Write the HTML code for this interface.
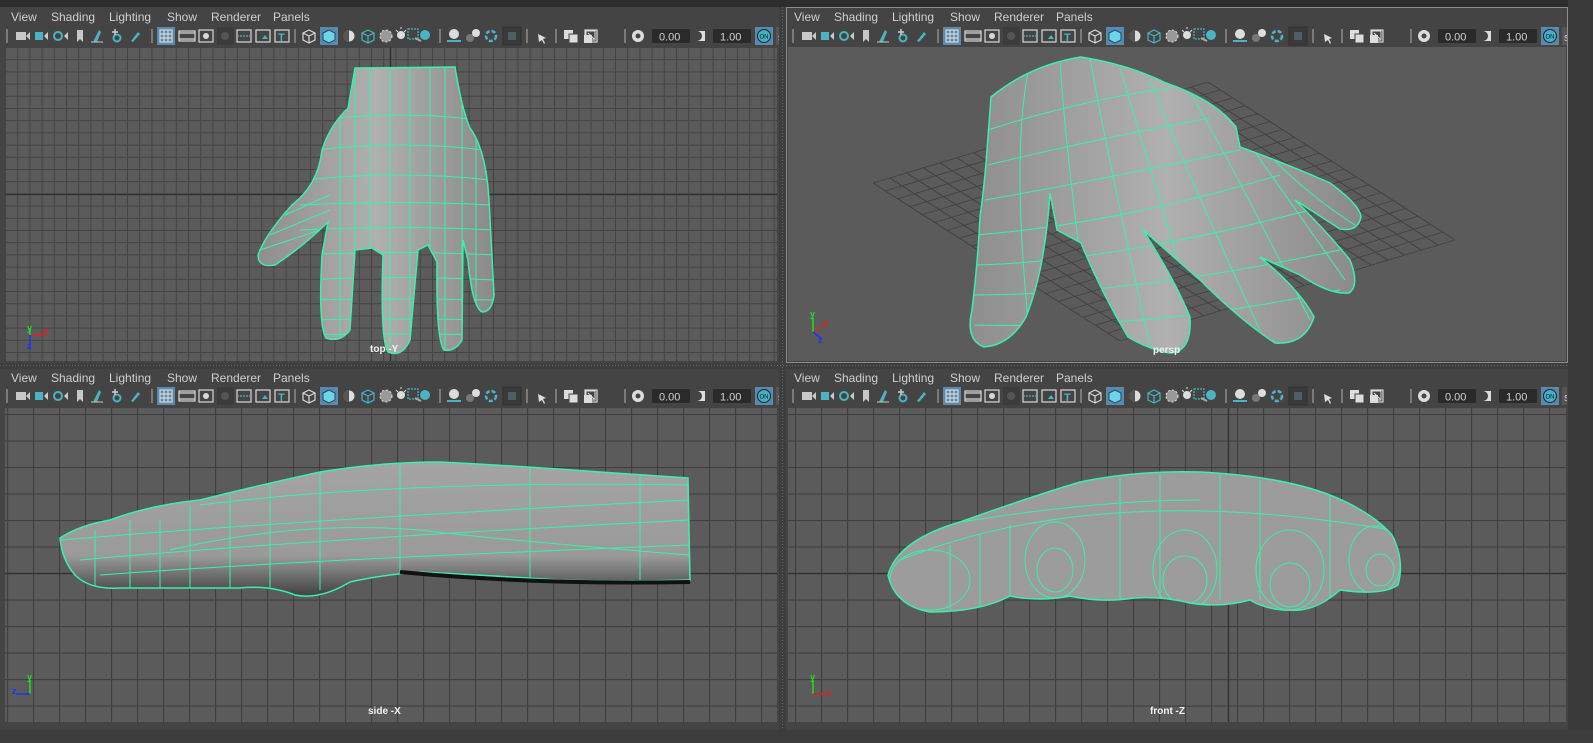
<!DOCTYPE html>
<html><head><meta charset="utf-8">
<style>
html,body{margin:0;padding:0;background:#444;width:1593px;height:743px;overflow:hidden;font-family:"Liberation Sans",sans-serif}
.menu{position:absolute;font-size:12px;color:#cfcfcf;white-space:nowrap}
.menu span{position:absolute;top:0}
</style></head><body>
<svg width="1593" height="743" style="position:absolute;left:0;top:0" xmlns="http://www.w3.org/2000/svg">
<defs>
<pattern id="g12" patternUnits="userSpaceOnUse" width="12.2" height="12.2" x="5" y="47"><rect width="12.2" height="12.2" fill="#5b5b5b"/><path d="M0 0.5H12.2M0.5 0V12.2" stroke="#444" stroke-width="1"/></pattern>
<pattern id="g26" patternUnits="userSpaceOnUse" width="26" height="26.5" x="7" y="414"><rect width="26" height="26.5" fill="#5b5b5b"/><path d="M0 0.5H26M0.5 0V26.5" stroke="#3f3f3f" stroke-width="1.2"/></pattern>
<pattern id="g26b" patternUnits="userSpaceOnUse" width="26" height="26.5" x="795" y="414"><rect width="26" height="26.5" fill="#5b5b5b"/><path d="M0 0.5H26M0.5 0V26.5" stroke="#3f3f3f" stroke-width="1.2"/></pattern>
<linearGradient id="skin" x1="0" y1="0" x2="1" y2="0"><stop offset="0" stop-color="#8e8e8e"/><stop offset=".5" stop-color="#b0b0b0"/><stop offset="1" stop-color="#8a8a8a"/></linearGradient>
<linearGradient id="skinv" x1="0" y1="0" x2="0" y2="1"><stop offset="0" stop-color="#a4a4a4"/><stop offset=".7" stop-color="#9a9a9a"/><stop offset="1" stop-color="#404040"/></linearGradient>
<g id="tb">
 <g fill="#7a7a7a"><rect x="6" y="3" width="2" height="14"/><rect x="151" y="3" width="2" height="14"/><rect x="294" y="3" width="2" height="14"/><rect x="439" y="3" width="2" height="14"/><rect x="526" y="3" width="2" height="14"/><rect x="555" y="3" width="2" height="14"/><rect x="624" y="3" width="2" height="14"/></g>
 <g fill="#c8c8c8">
  <rect x="16" y="6" width="10" height="8"/><path d="M26 10l4-4v8z"/>
  <rect x="35" y="6" width="8" height="8" fill="#4ab3c4"/><path d="M44 10l4-4v8z"/>
  <circle cx="58" cy="10" r="4" fill="none" stroke="#4ab3c4" stroke-width="2"/><path d="M64 10l4-4v8z"/>
  <path d="M77 4h6v12l-3-3-3 3z"/>
  <path d="M93 16l6-12 2 2-4 10z" fill="#4ab3c4"/><path d="M91 16h12" stroke="#c8c8c8"/>
  <circle cx="117" cy="12" r="3.5" fill="none" stroke="#4ab3c4" stroke-width="2"/><path d="M112 6h6M115 3v6" stroke="#ccc" stroke-width="1.5"/>
  <path d="M131 15l7-9 2 2-7 8z" fill="#4ab3c4"/>
 </g>
 <rect x="157" y="1" width="18" height="18" fill="#5b89ad"/>
 <g fill="none" stroke="#d8d8d8" stroke-width="1.2">
  <rect x="160" y="4" width="12" height="12"/><path d="M164 4v12M168 4v12M160 8h12M160 12h12"/>
  <rect x="179" y="5" width="16" height="10"/><path d="M179 7h16M179 13h16"/>
  <rect x="199" y="4" width="14" height="12"/>
  <rect x="237" y="4" width="14" height="12"/><path d="M237 10h14" stroke="#4ab3c4" stroke-dasharray="2 1"/>
  <rect x="256" y="4" width="14" height="12"/>
  <rect x="275" y="4" width="14" height="12"/>
  <path d="M303 7l6-3 6 3v7l-6 3-6-3z M303 7l6 3 6-3 M309 10v7"/>
  <path d="M362 7l6-3 6 3v7l-6 3-6-3z M362 7l6 3 6-3 M368 10v7" stroke="#4ab3c4"/>
  <rect x="408" y="3" width="10" height="10" stroke="#4ab3c4" stroke-dasharray="2 1"/>
  <rect x="585" y="4" width="12" height="12"/><path d="M588 7l6 6"/>
 </g>
 <circle cx="206" cy="10" r="3" fill="#d8d8d8"/>
 <rect x="217" y="1" width="17" height="18" fill="#3c3c3c"/><circle cx="225" cy="10" r="4" fill="#555"/>
 <path d="M262 13l3-4 3 4z M264 13l2-5" fill="#4ab3c4"/><text x="278" y="15" font-size="11" fill="#4ab3c4" font-weight="bold" font-family="Liberation Sans">T</text>
 <rect x="320" y="1" width="18" height="18" fill="#5b89ad"/>
 <path d="M323 7l6-3 6 3v7l-6 3-6-3z" fill="#6ed4e8" stroke="#1d4a5e"/>
 <circle cx="349" cy="10" r="5.5" fill="#ddd"/><path d="M349 4.5a5.5 5.5 0 0 0 0 11z" fill="#555"/>
 <circle cx="386" cy="10" r="6" fill="#999"/><circle cx="386" cy="10" r="6" fill="none" stroke="#ddd" stroke-dasharray="2 2"/>
 <circle cx="401" cy="9" r="4" fill="#ddd"/><path d="M396 4l2 2M406 4l-2 2M401 1v2" stroke="#ddd"/>
 <circle cx="425" cy="9" r="5" fill="#4ab3c4"/><path d="M415 12l6 3" stroke="#aaa" stroke-width="2"/>
 <circle cx="454" cy="8" r="5" fill="#ddd"/><path d="M447 15h14" stroke="#4ab3c4" stroke-width="2"/>
 <circle cx="470" cy="12" r="4" fill="#777"/><circle cx="476" cy="7" r="4" fill="#ddd"/>
 <circle cx="491" cy="10" r="5" fill="none" stroke="#4ab3c4" stroke-width="2.5" stroke-dasharray="4 2"/>
 <rect x="503" y="1" width="18" height="18" fill="#3a3a3a" stroke="#2f2f2f"/><rect x="508" y="6" width="8" height="8" fill="#4f5e62"/>
 <path d="M538 8l8 4-3 1 2 4-1 1-2-4-3 2z" fill="#ddd"/>
 <rect x="564" y="4" width="9" height="9" fill="#ddd"/><rect x="569" y="8" width="9" height="9" fill="#ddd" stroke="#444"/>
 <rect x="586" y="5" width="9" height="9" fill="none" stroke="#ddd"/><rect x="584" y="9" width="8" height="8" fill="#ddd"/>
 <circle cx="638" cy="10" r="6" fill="#ddd"/><circle cx="638" cy="10" r="2.5" fill="#444"/>
 <rect x="652" y="3" width="38" height="14" rx="1" fill="#2a2a2a"/>
 <text x="659" y="14.5" font-size="11" fill="#d0d0d0" font-family="Liberation Sans">0.00</text>
 <path d="M697 5h8v10h-8a5 5 0 0 0 0-10z" fill="#ddd"/>
 <rect x="713" y="3" width="38" height="14" rx="1" fill="#2a2a2a"/>
 <text x="720" y="14.5" font-size="11" fill="#d0d0d0" font-family="Liberation Sans">1.00</text>
 <rect x="755" y="1" width="18" height="18" fill="#5b89ad"/><circle cx="764" cy="10" r="6.5" fill="#3fb3c2" stroke="#222"/>
 <text x="759.5" y="12.5" font-size="6" fill="#113" font-family="Liberation Sans">ON</text>
 <rect x="776" y="1" width="24" height="18" fill="#555"/><text x="778" y="15" font-size="11" fill="#ccc" font-family="Liberation Sans">sRGB</text>
</g>
<clipPath id="cl"><rect x="0" y="0" width="779" height="20"/></clipPath>
<clipPath id="cr"><rect x="0" y="0" width="781" height="20"/></clipPath>
</defs>
<rect width="1593" height="743" fill="#444"/>
<rect width="1593" height="7" fill="#2d2d2d"/>
<rect x="1568" y="0" width="25" height="743" fill="#3a3a3a"/>
<rect x="0" y="730" width="1593" height="13" fill="#3c3c3c"/>
<rect x="779" y="7" width="7" height="723" fill="#3e3e3e"/>
<rect x="0" y="363" width="1568" height="6" fill="#3e3e3e"/>
<path d="M0 365.5H1568" stroke="#666" stroke-dasharray="1 2"/>
<path d="M782.5 7V730" stroke="#666" stroke-dasharray="1 2"/>
<g transform="translate(0,26)" clip-path="url(#cl)"><use href="#tb"/></g>
<g transform="translate(786,26)" clip-path="url(#cr)"><use href="#tb"/></g>
<g transform="translate(0,386)" clip-path="url(#cl)"><use href="#tb"/></g>
<g transform="translate(786,386)" clip-path="url(#cr)"><use href="#tb"/></g>
<rect x="5" y="47" width="772" height="314" fill="url(#g12)"/>
<path d="M5 194.5H777M390.5 47V361" stroke="#333" stroke-width="1.5"/>
<rect x="786.5" y="7.5" width="781" height="355" fill="none" stroke="#8c8c8c"/>
<rect x="788" y="47" width="778" height="314" fill="#5b5b5b"/>
<rect x="5" y="408" width="772" height="314" fill="url(#g26)"/>
<path d="M5 573.5H777" stroke="#343434" stroke-width="1.5"/>
<rect x="788" y="408" width="778" height="314" fill="url(#g26b)"/>
<path d="M788 573.5H1566M1228.5 408V722" stroke="#343434" stroke-width="1.5"/>

<g transform="matrix(16.75,-5.05,12.35,7.9,873,183)" fill="none" stroke="#404040" stroke-width="0.07">
<path d="M0 0H20M0 1H20M0 2H20M0 3H20M0 4H20M0 5H20M0 6H20M0 7H20M0 8H20M0 9H20M0 10H20M0 11H20M0 12H20M0 13H20M0 14H20M0 15H20M0 16H20M0 17H20M0 18H20M0 19H20M0 20H20M0 0V20M1 0V20M2 0V20M3 0V20M4 0V20M5 0V20M6 0V20M7 0V20M8 0V20M9 0V20M10 0V20M11 0V20M12 0V20M13 0V20M14 0V20M15 0V20M16 0V20M17 0V20M18 0V20M19 0V20M20 0V20"/>
</g>

<clipPath id="h1"><path id="p1" d="M355 68L455 67Q462 110 470 128Q486 150 489 200L494 295Q492 312 482 312Q472 306 468 260L463 240L462 340Q455 352 444 350Q436 340 437 262L428 245L418 250L410 340Q402 358 388 352Q380 340 383 255L372 248L355 250L350 330Q340 343 326 338Q318 325 322 255L328 222Q305 245 275 265Q258 268 258 255Q265 235 292 205Q318 185 322 150Q330 125 348 108Z"/></clipPath>
<use href="#p1" fill="url(#skin)"/>
<g clip-path="url(#h1)" stroke="#3cf0a8" stroke-width="1" fill="none">
<path d="M340 90V360M355 68V360M370 68V360M390 68V360M410 68V360M430 68V360M445 68V360M462 68V360M476 68V360"/>
<path d="M320 120Q400 110 480 120M315 150Q400 140 485 150M305 180Q400 170 490 180M300 205Q400 200 490 205M300 230Q400 225 495 230M300 255Q400 250 495 255M300 280Q400 275 495 280M300 300Q400 298 495 300M300 320Q400 318 495 320M300 335Q400 333 495 335M260 250L320 230M270 235L330 210M285 215L330 195"/>
</g>
<use href="#p1" fill="none" stroke="#3cf0a8" stroke-width="1.5"/>

<clipPath id="h2"><path id="p2" d="M991 97Q1030 65 1081 57Q1130 65 1166 83Q1215 100 1236 127L1240 147Q1290 165 1330 183Q1360 205 1361 217Q1358 232 1340 229L1295 200Q1330 235 1350 260Q1360 285 1349 293Q1330 295 1300 275L1260 257Q1300 290 1314 317Q1305 345 1275 343Q1240 320 1200 280L1143 230Q1175 280 1190 317Q1192 352 1170 353Q1150 350 1128 337Q1100 290 1081 243L1057 230L1050 193Q1045 270 1026 317Q1010 345 984 347Q965 340 972 310Q978 260 980 217Q985 180 987 150Z"/></clipPath>
<use href="#p2" fill="url(#skin)"/>
<g clip-path="url(#h2)" stroke="#3cf0a8" stroke-width="1" fill="none">
<path d="M988 130Q1080 100 1170 88M988 165Q1090 140 1210 118M985 200Q1100 180 1240 150M975 235Q1110 225 1280 175M975 265Q1110 262 1310 210M972 295Q1130 295 1340 250M975 325Q1150 330 1340 290"/>
<path d="M1030 63Q1010 150 1030 340M1060 58Q1065 150 1090 330M1090 58Q1110 170 1150 345M1120 68Q1150 170 1200 330M1150 80Q1190 180 1260 330M1190 92Q1235 170 1310 320M1225 110Q1275 180 1345 280M1255 140Q1300 190 1355 225"/>
</g>
<use href="#p2" fill="none" stroke="#3cf0a8" stroke-width="1.5"/>

<clipPath id="h3"><path id="p3" d="M60 538Q80 525 110 520Q150 505 200 500Q260 485 320 472Q380 462 440 462Q520 466 600 472L688 478L690 580Q620 582 560 580Q480 575 420 572Q380 575 350 582Q320 600 295 595Q270 585 240 588Q180 588 120 588Q90 590 75 575Q62 560 60 538Z"/></clipPath>
<use href="#p3" fill="url(#skinv)"/>
<g clip-path="url(#h3)" stroke="#3cf0a8" stroke-width="1" fill="none">
<path d="M60 540Q300 520 690 500M80 560Q300 540 690 520M100 575Q300 560 690 545M200 505Q400 480 690 485M170 550Q300 520 420 530Q500 540 690 555M95 530V590M130 520V590M160 520V590M190 505V590M230 495V590M270 485V590M320 472V590M400 462V575M530 468V580M640 475V580"/>
</g>
<use href="#p3" fill="none" stroke="#3cf0a8" stroke-width="1.5"/>
<path d="M400 572Q540 585 690 582" stroke="#111" stroke-width="4" fill="none"/>

<clipPath id="h4"><path id="p4" d="M888 575Q898 540 960 522Q1030 497 1080 482Q1140 470 1200 472Q1280 476 1330 495Q1372 512 1392 535Q1405 560 1398 585Q1382 596 1340 590Q1320 608 1300 610Q1270 612 1250 600Q1220 608 1190 603Q1160 596 1135 598Q1100 603 1070 596Q1040 602 1010 596Q980 612 930 612Q895 606 888 575Z"/></clipPath>
<use href="#p4" fill="#9c9c9c"/>
<g clip-path="url(#h4)" stroke="#3cf0a8" stroke-width="1" fill="none">
<ellipse cx="1055" cy="560" rx="30" ry="38"/><ellipse cx="1055" cy="570" rx="18" ry="22"/>
<ellipse cx="1185" cy="570" rx="32" ry="40"/><ellipse cx="1185" cy="580" rx="22" ry="24"/>
<ellipse cx="1290" cy="570" rx="34" ry="40"/><ellipse cx="1290" cy="585" rx="20" ry="22"/>
<ellipse cx="1375" cy="560" rx="26" ry="34"/><ellipse cx="1380" cy="570" rx="14" ry="16"/>
<ellipse cx="930" cy="580" rx="40" ry="30"/>
<path d="M900 560Q1100 480 1390 530M960 522Q1100 500 1200 500M950 545V612M980 535V610M1010 525V600M1120 478V600M1160 474V600M1220 474V600M1260 480V600M1330 495V600"/>
</g>
<use href="#p4" fill="none" stroke="#3cf0a8" stroke-width="1.5"/>

<g stroke-width="1.5" fill="none">
<path d="M30 335H46" stroke="#e02020"/><path d="M30 335V348" stroke="#2030ff"/><path d="M30 335V328" stroke="#20e020"/>
<path d="M813 332L825 325" stroke="#e02020"/><path d="M813 332V318" stroke="#20e020"/><path d="M813 332L822 339" stroke="#2030ff"/>
<path d="M30 694V680" stroke="#20e020"/><path d="M30 694H16" stroke="#2030ff"/>
<path d="M813 694V680" stroke="#20e020"/><path d="M813 694H826" stroke="#e02020"/>
</g>
<g font-size="9" font-family="Liberation Sans" font-weight="bold">
<text x="27" y="331" fill="#20e020">y</text><text x="43" y="334" fill="#e02020">x</text><text x="27" y="349" fill="#2030ff">z</text>
<text x="810" y="317" fill="#20e020">y</text><text x="823" y="325" fill="#e02020">x</text><text x="818" y="343" fill="#2030ff">z</text>
<text x="27" y="680" fill="#20e020">y</text><text x="12" y="694" fill="#2030ff">z</text>
<text x="810" y="680" fill="#20e020">y</text><text x="826" y="696" fill="#e02020">x</text>
</g>
<g font-size="10" font-family="Liberation Sans" font-weight="bold" fill="#f0f0f0">
<text x="370" y="352">top -Y</text>
<text x="1153" y="353">persp</text>
<text x="368" y="714">side -X</text>
<text x="1150" y="714">front -Z</text>
</g>
</svg>
<div class="menu" style="left:0;top:10px"><span style="left:11px">View</span><span style="left:51px">Shading</span><span style="left:109px">Lighting</span><span style="left:167px">Show</span><span style="left:211px">Renderer</span><span style="left:273px">Panels</span></div>
<div class="menu" style="left:786px;top:10px"><span style="left:8px">View</span><span style="left:48px">Shading</span><span style="left:106px">Lighting</span><span style="left:164px">Show</span><span style="left:208px">Renderer</span><span style="left:270px">Panels</span></div>
<div class="menu" style="left:0;top:371px"><span style="left:11px">View</span><span style="left:51px">Shading</span><span style="left:109px">Lighting</span><span style="left:167px">Show</span><span style="left:211px">Renderer</span><span style="left:273px">Panels</span></div>
<div class="menu" style="left:786px;top:371px"><span style="left:8px">View</span><span style="left:48px">Shading</span><span style="left:106px">Lighting</span><span style="left:164px">Show</span><span style="left:208px">Renderer</span><span style="left:270px">Panels</span></div>
</body></html>
